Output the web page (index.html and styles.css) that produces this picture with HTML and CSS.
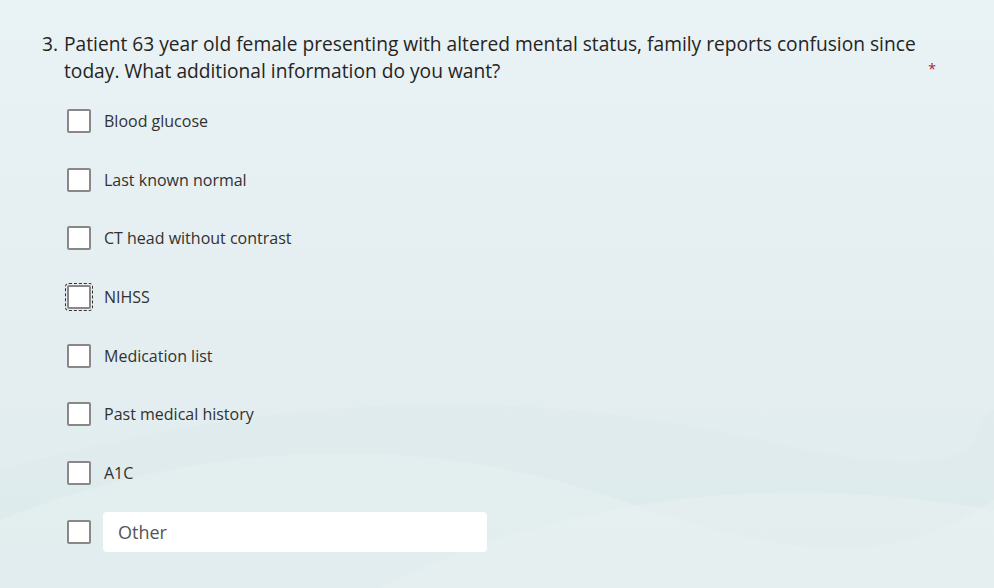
FILE: index.html
```html
<!DOCTYPE html>
<html lang="en">
<head>
    <meta charset="UTF-8">
    <meta name="viewport" content="width=device-width, initial-scale=1.0">
    <title>Question 3</title>
    <link rel="stylesheet" href="styles.css">
</head>
<body>
    <svg class="waves" viewBox="0 0 994 588" preserveAspectRatio="none" aria-hidden="true">
        <path d="M0 520 C 200 440, 420 430, 620 500 S 900 560, 994 500 L994 588 L0 588 Z" fill="#ffffff" opacity="0.18"/>
        <path d="M380 588 C 560 500, 760 470, 994 510 L994 588 Z" fill="#ffffff" opacity="0.2"/>
        <path d="M0 470 C 250 400, 500 380, 760 440 S 960 420, 994 410 L994 588 L0 588 Z" fill="#d6e6e9" opacity="0.25"/>
    </svg>

    <main class="question">
        <div class="title">
            <span class="num">3.</span>
            <span class="text">Patient 63 year old female presenting with altered mental status, family reports confusion since today. What additional information do you want?</span>
            <span class="required">*</span>
        </div>

        <div class="options">
            <label class="option"><span class="box"></span>Blood glucose</label>
            <label class="option"><span class="box"></span>Last known normal</label>
            <label class="option"><span class="box"></span>CT head without contrast</label>
            <label class="option"><span class="box focus"></span>NIHSS</label>
            <label class="option"><span class="box"></span>Medication list</label>
            <label class="option"><span class="box"></span>Past medical history</label>
            <label class="option"><span class="box"></span>A1C</label>
            <div class="option other"><span class="box"></span><input type="text" placeholder="Other"></div>
        </div>
    </main>
</body>
</html>
```

FILE: styles.css
```css
body {
    margin: 0;
    height: 588px;
    overflow: hidden;
    font-family: 'Open Sans', sans-serif;
    color: #252423;
    background: linear-gradient(180deg, #e9f2f4 0%, #e4eef0 60%, #e0ecee 100%);
    position: relative;
}

.waves {
    position: absolute;
    left: 0;
    top: 0;
    width: 100%;
    height: 100%;
    z-index: 0;
}

.question {
    position: relative;
    z-index: 1;
    padding: 30px 0 0 42px;
    width: 898px;
}

.title {
    display: flex;
    font-size: 19.2px;
    line-height: 27px;
}

.num {
    width: 22px;
    flex: none;
}

.text {
    flex: 1;
}

.required {
    color: #a4262c;
    font-size: 14px;
    align-self: flex-end;
    margin-left: 10px;
    margin-right: 4px;
    line-height: 20px;
    position: relative;
    top: -5px;
}

.options {
    display: flex;
    flex-direction: column;
    gap: 34.7px;
    padding: 25px 0 0 25px;
}

.option {
    display: flex;
    align-items: center;
    height: 24px;
    font-size: 16px;
    color: #323130;
}

.box {
    width: 20px;
    height: 20px;
    border: 2px solid #8a8886;
    border-radius: 2px;
    background: white;
    margin-right: 13px;
    flex: none;
}

.box.focus {
    outline: 1px dashed #323130;
    outline-offset: 1px;
}

.other input {
    width: 384px;
    height: 40px;
    box-sizing: border-box;
    border: none;
    border-radius: 4px;
    background: white;
    padding: 0 15px;
    font-family: 'Open Sans', sans-serif;
    font-size: 18px;
    margin-left: -1px;
}

.other input::placeholder {
    color: #555;
}
```
